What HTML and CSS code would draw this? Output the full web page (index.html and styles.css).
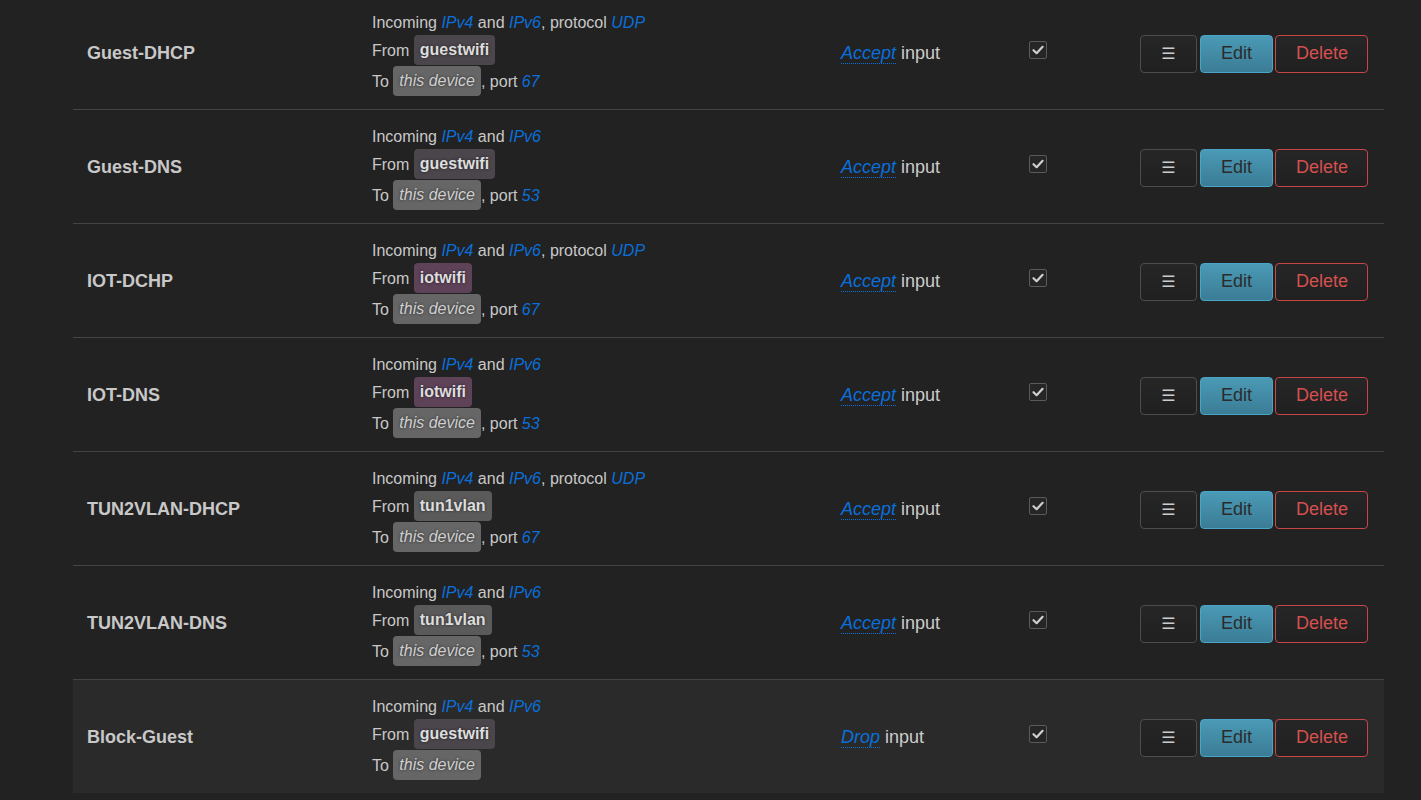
FILE: index.html
```html
<!DOCTYPE html>
<html>
<head>
<meta charset="utf-8">
<link rel="stylesheet" href="styles.css">
</head>
<body>
<div class="table">

  <div class="row">
    <div class="cell name">Guest-DHCP</div>
    <div class="cell desc">
      <div class="line first">Incoming <i class="lnk">IPv4</i> and <i class="lnk">IPv6</i>, protocol <i class="lnk">UDP</i></div>
      <div class="line">From <span class="badge zone-guest">guestwifi</span></div>
      <div class="line">To <span class="badge dev">this device</span>, port <i class="lnk">67</i></div>
    </div>
    <div class="cell act"><span class="target">Accept</span> input</div>
    <div class="cell en"><span class="chk"><svg viewBox="0 0 18 18" width="18" height="18"><path d="M4.5 9.2 L7.6 12.2 L13.6 5.8" fill="none" stroke="#d0d0d0" stroke-width="2.2" stroke-linecap="round" stroke-linejoin="round"/></svg></span></div>
    <div class="cell btns"><button class="btn menu">☰</button><button class="btn edit">Edit</button><button class="btn del">Delete</button></div>
  </div>

  <div class="row">
    <div class="cell name">Guest-DNS</div>
    <div class="cell desc">
      <div class="line first">Incoming <i class="lnk">IPv4</i> and <i class="lnk">IPv6</i></div>
      <div class="line">From <span class="badge zone-guest">guestwifi</span></div>
      <div class="line">To <span class="badge dev">this device</span>, port <i class="lnk">53</i></div>
    </div>
    <div class="cell act"><span class="target">Accept</span> input</div>
    <div class="cell en"><span class="chk"><svg viewBox="0 0 18 18" width="18" height="18"><path d="M4.5 9.2 L7.6 12.2 L13.6 5.8" fill="none" stroke="#d0d0d0" stroke-width="2.2" stroke-linecap="round" stroke-linejoin="round"/></svg></span></div>
    <div class="cell btns"><button class="btn menu">☰</button><button class="btn edit">Edit</button><button class="btn del">Delete</button></div>
  </div>

  <div class="row">
    <div class="cell name">IOT-DCHP</div>
    <div class="cell desc">
      <div class="line first">Incoming <i class="lnk">IPv4</i> and <i class="lnk">IPv6</i>, protocol <i class="lnk">UDP</i></div>
      <div class="line">From <span class="badge zone-iot">iotwifi</span></div>
      <div class="line">To <span class="badge dev">this device</span>, port <i class="lnk">67</i></div>
    </div>
    <div class="cell act"><span class="target">Accept</span> input</div>
    <div class="cell en"><span class="chk"><svg viewBox="0 0 18 18" width="18" height="18"><path d="M4.5 9.2 L7.6 12.2 L13.6 5.8" fill="none" stroke="#d0d0d0" stroke-width="2.2" stroke-linecap="round" stroke-linejoin="round"/></svg></span></div>
    <div class="cell btns"><button class="btn menu">☰</button><button class="btn edit">Edit</button><button class="btn del">Delete</button></div>
  </div>

  <div class="row">
    <div class="cell name">IOT-DNS</div>
    <div class="cell desc">
      <div class="line first">Incoming <i class="lnk">IPv4</i> and <i class="lnk">IPv6</i></div>
      <div class="line">From <span class="badge zone-iot">iotwifi</span></div>
      <div class="line">To <span class="badge dev">this device</span>, port <i class="lnk">53</i></div>
    </div>
    <div class="cell act"><span class="target">Accept</span> input</div>
    <div class="cell en"><span class="chk"><svg viewBox="0 0 18 18" width="18" height="18"><path d="M4.5 9.2 L7.6 12.2 L13.6 5.8" fill="none" stroke="#d0d0d0" stroke-width="2.2" stroke-linecap="round" stroke-linejoin="round"/></svg></span></div>
    <div class="cell btns"><button class="btn menu">☰</button><button class="btn edit">Edit</button><button class="btn del">Delete</button></div>
  </div>

  <div class="row">
    <div class="cell name">TUN2VLAN-DHCP</div>
    <div class="cell desc">
      <div class="line first">Incoming <i class="lnk">IPv4</i> and <i class="lnk">IPv6</i>, protocol <i class="lnk">UDP</i></div>
      <div class="line">From <span class="badge zone-tun">tun1vlan</span></div>
      <div class="line">To <span class="badge dev">this device</span>, port <i class="lnk">67</i></div>
    </div>
    <div class="cell act"><span class="target">Accept</span> input</div>
    <div class="cell en"><span class="chk"><svg viewBox="0 0 18 18" width="18" height="18"><path d="M4.5 9.2 L7.6 12.2 L13.6 5.8" fill="none" stroke="#d0d0d0" stroke-width="2.2" stroke-linecap="round" stroke-linejoin="round"/></svg></span></div>
    <div class="cell btns"><button class="btn menu">☰</button><button class="btn edit">Edit</button><button class="btn del">Delete</button></div>
  </div>

  <div class="row">
    <div class="cell name">TUN2VLAN-DNS</div>
    <div class="cell desc">
      <div class="line first">Incoming <i class="lnk">IPv4</i> and <i class="lnk">IPv6</i></div>
      <div class="line">From <span class="badge zone-tun">tun1vlan</span></div>
      <div class="line">To <span class="badge dev">this device</span>, port <i class="lnk">53</i></div>
    </div>
    <div class="cell act"><span class="target">Accept</span> input</div>
    <div class="cell en"><span class="chk"><svg viewBox="0 0 18 18" width="18" height="18"><path d="M4.5 9.2 L7.6 12.2 L13.6 5.8" fill="none" stroke="#d0d0d0" stroke-width="2.2" stroke-linecap="round" stroke-linejoin="round"/></svg></span></div>
    <div class="cell btns"><button class="btn menu">☰</button><button class="btn edit">Edit</button><button class="btn del">Delete</button></div>
  </div>

  <div class="row hover">
    <div class="cell name">Block-Guest</div>
    <div class="cell desc">
      <div class="line first">Incoming <i class="lnk">IPv4</i> and <i class="lnk">IPv6</i></div>
      <div class="line">From <span class="badge zone-guest">guestwifi</span></div>
      <div class="line">To <span class="badge dev">this device</span></div>
    </div>
    <div class="cell act"><span class="target">Drop</span> input</div>
    <div class="cell en"><span class="chk"><svg viewBox="0 0 18 18" width="18" height="18"><path d="M4.5 9.2 L7.6 12.2 L13.6 5.8" fill="none" stroke="#d0d0d0" stroke-width="2.2" stroke-linecap="round" stroke-linejoin="round"/></svg></span></div>
    <div class="cell btns"><button class="btn menu">☰</button><button class="btn edit">Edit</button><button class="btn del">Delete</button></div>
  </div>

</div>
</body>
</html>
```

FILE: styles.css
```css
html, body {
  margin: 0;
  padding: 0;
  background: #222222;
  color: #c8c8c8;
  font-family: "Liberation Sans", Arial, sans-serif;
  font-size: 16px;
  overflow: hidden;
}

.table {
  margin: -5px 0 0 73px;
  width: 1311px;
}

.row {
  display: grid;
  grid-template-columns: 285px 469px 188px 111px 258px;
  align-items: center;
  height: 113px;
  border-top: 1px solid #444444;
}

.row:first-child {
  border-top-color: transparent;
}

.row.hover {
  background: #2a2a2a;
}

.cell {
  padding: 0 14px;
}

.name {
  font-weight: bold;
  font-size: 18px;
  color: #c8c8c8;
  padding-top: 2px;
}

.desc {
  padding-top: 3px;
}

.line {
  height: 31px;
  line-height: 31px;
  white-space: nowrap;
}

.line.first {
  height: 24px;
  line-height: 24px;
}

.lnk {
  color: #0a6fdb;
  font-style: italic;
}

.badge {
  display: inline-block;
  line-height: 22px;
  padding: 4px 6px;
  border-radius: 4px;
  font-weight: bold;
  color: #dddddd;
  text-shadow: 0 0 3px rgba(0, 0, 0, 0.6);
  vertical-align: middle;
  margin-top: -3px;
}

.zone-guest { background: #4b464b; }
.zone-iot { background: #5d4258; }
.zone-tun { background: #5a5a5a; }

.badge.dev {
  background: #666666;
  font-weight: normal;
  font-style: italic;
  color: #cfcfcf;
  padding: 4px 6px;
}

.act {
  font-size: 18px;
  color: #cccccc;
  padding-top: 2px;
}

.target {
  color: #0a6fdb;
  font-style: italic;
  border-bottom: 1px dotted #0a6fdb;
}

.en {
  display: flex;
  padding-bottom: 6px;
}

.chk {
  display: inline-block;
  width: 16px;
  height: 16px;
  border: 1px solid #5a5a5a;
  border-radius: 2px;
  background: #262626;
  position: relative;
}

.chk svg {
  position: absolute;
  left: -1px;
  top: -1px;
}

.btns {
  display: flex;
  justify-content: flex-end;
  gap: 2px;
  padding: 2px 16px 0 0;
}

.btn {
  height: 38px;
  font-family: "Liberation Sans", Arial, sans-serif;
  font-size: 18px;
  border-radius: 4px;
  padding: 0 20px;
  margin: 0;
  border: 1px solid;
  cursor: pointer;
}

.btn.menu {
  width: 57px;
  padding: 0;
  margin-right: 1px;
  color: #cccccc;
  background: linear-gradient(#262626, #202020);
  border-color: #4d4d4d;
  font-family: "DejaVu Sans", sans-serif;
  font-size: 16px;
}

.btn.edit {
  color: #2b2b2b;
  background: linear-gradient(#4a9ab6, #3b7c95);
  border-color: #4aa4c6;
}

.btn.del {
  color: #d65050;
  background: linear-gradient(#262626, #202020);
  border-color: #c94646;
  padding: 0 19px 0 20px;
}
```
